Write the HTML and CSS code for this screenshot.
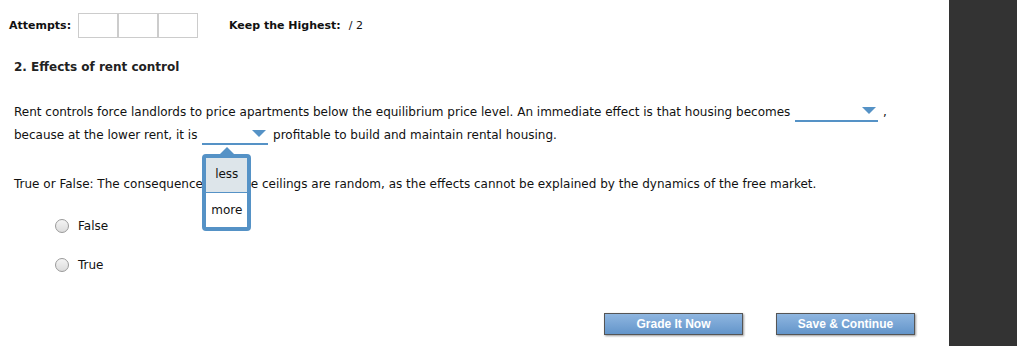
FILE: index.html
```html
<!DOCTYPE html>
<html lang="en">
<head>
    <meta charset="UTF-8">
    <title>Effects of rent control</title>
    <link rel="stylesheet" href="styles.css">
</head>
<body>
    <div class="page">
        <div class="content">
            <div class="attempts-bar">
                <span class="label">Attempts:</span>
                <div class="attempt-boxes">
                    <span class="box"></span><span class="box"></span><span class="box"></span>
                </div>
                <span class="label keep">Keep the Highest:</span>
                <span class="score">/ 2</span>
            </div>

            <h2 class="question-title">2. Effects of rent control</h2>

            <p class="para">
                Rent controls force landlords to price apartments below the equilibrium price level. An immediate effect is that housing becomes
                <span class="dropdown wide"><span class="caret"></span></span> ,<br>
                because at the lower rent, it is
                <span class="dropdown narrow open"><span class="caret"></span>
                    <span class="menu">
                        <span class="option selected">less</span>
                        <span class="option">more</span>
                    </span>
                </span>
                profitable to build and maintain rental housing.
            </p>

            <p class="para tf">True or False: The consequences of price ceilings are random, as the effects cannot be explained by the dynamics of the free market.</p>

            <div class="choices">
                <label class="choice"><span class="radio"></span>False</label>
                <label class="choice"><span class="radio"></span>True</label>
            </div>

            <div class="actions">
                <button class="btn">Grade It Now</button>
                <button class="btn">Save &amp; Continue</button>
            </div>
        </div>
        <div class="sidebar"></div>
    </div>
</body>
</html>
```

FILE: styles.css
```css
body { margin: 0; font-family: "DejaVu Sans", Verdana, sans-serif; font-size: 12px; color: #111; background: #fff; }
.page { display: flex; height: 346px; overflow: hidden; }
.content { width: 949px; padding: 13px 0 0 0; box-sizing: border-box; }
.sidebar { flex: 1; background: #333; }

.attempts-bar { display: flex; align-items: center; padding-left: 9px; height: 25px; }
.label { font-weight: bold; font-size: 11px; }
.attempt-boxes { display: flex; margin-left: 7px; }
.box { width: 38px; height: 23px; border: 1px solid #ccc; }
.keep { margin-left: 31px; }
.score { margin-left: 8px; font-size: 11px; }

.question-title { font-size: 12px; font-weight: bold; margin: 22px 0 0 14px; color: #222; }

.para { margin: 27px 0 0 14px; line-height: 23px; }
.tf { margin-top: 26px; }

.dropdown { display: inline-block; position: relative; height: 16px; border-bottom: 2px solid #5592c6; vertical-align: -6px; margin: 0 1px; }
.dropdown.wide { width: 83px; }
.dropdown.narrow { width: 66px; }
.caret { position: absolute; right: 2px; top: 3px; width: 0; height: 0;
         border-left: 7px solid transparent; border-right: 7px solid transparent; border-top: 7px solid #5592c6; }

.menu { position: absolute; left: 0; top: 27px; width: 41px; border: 4px solid #5592c6; border-radius: 4px; background: #fff; z-index: 2; text-align: center; }
.menu::before { content: ""; position: absolute; top: -11px; left: 14px; width: 0; height: 0;
                border-left: 7px solid transparent; border-right: 7px solid transparent; border-bottom: 7px solid #5592c6; }
.option { display: block; height: 34px; line-height: 34px; }
.option.selected { background: #dde5ea; border-bottom: 1px solid #5592c6; line-height: 33px; }

.choices { margin: 23px 0 0 55px; display: flex; flex-direction: column; gap: 25px; }
.choice { display: flex; align-items: center; gap: 9px; }
.radio { width: 12px; height: 12px; border: 1px solid #9a9a9a; border-radius: 50%; background: linear-gradient(#f4f4f4, #dcdcdc); }

.actions { display: flex; justify-content: flex-end; gap: 33px; margin: 41px 34px 0 0; }
.btn { width: 139px; height: 22px; border: 1px solid #555; background: linear-gradient(#8fb6e0, #6395ca); color: #fff;
       font-family: "Liberation Sans", Arial, sans-serif; font-weight: bold; font-size: 12px; box-shadow: 1px 1px 2px rgba(0,0,0,0.4); padding: 0; }
```
